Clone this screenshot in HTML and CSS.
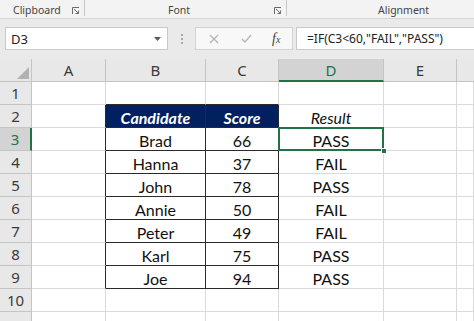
FILE: index.html
```html
<!DOCTYPE html>
<html>
<head>
<meta charset="utf-8">
<link rel="stylesheet" href="styles.css">
</head>
<body>
<div class="ribbon">
  <div class="group g1"><span class="glabel">Clipboard</span><svg class="launch" width="8" height="8" viewBox="0 0 8 8"><path d="M0.5 7V0.5H7" fill="none" stroke="#6b6b6b"/><path d="M2 2L6.5 6.5M3.5 6.5H6.5V3.5" fill="none" stroke="#6b6b6b"/></svg></div>
  <div class="group g2"><span class="glabel">Font</span><svg class="launch" width="8" height="8" viewBox="0 0 8 8"><path d="M0.5 7V0.5H7" fill="none" stroke="#6b6b6b"/><path d="M2 2L6.5 6.5M3.5 6.5H6.5V3.5" fill="none" stroke="#6b6b6b"/></svg></div>
  <div class="group g3"><span class="glabel">Alignment</span></div>
</div>
<div class="fbar">
  <div class="namebox"><span>D3</span><svg class="dd" width="7" height="4" viewBox="0 0 7 4"><path d="M0 0H7L3.5 4Z" fill="#5a5a5a"/></svg></div>
  <div class="dots"><i></i><i></i><i></i></div>
  <div class="fbtns">
    <svg class="fx-x" width="10" height="10" viewBox="0 0 10 10"><path d="M1 1L9 9M9 1L1 9" stroke="#b4b4b4" stroke-width="1.2"/></svg>
    <svg class="fx-ok" width="11" height="9" viewBox="0 0 11 9"><path d="M1 5L4 8L10 1" fill="none" stroke="#b4b4b4" stroke-width="1.2"/></svg>
    <span class="fx"><i>f</i><i class="fxs">x</i></span>
  </div>
  <div class="finput">=IF(C3&lt;60,"FAIL","PASS")</div>
</div>
<div class="sheet">
  <div class="c h corner"><svg width="12" height="12" viewBox="0 0 12 12"><path d="M12 0V12H0Z" fill="#b2b2b2"/></svg></div>
  <div class="c h">A</div><div class="c h">B</div><div class="c h">C</div><div class="c h hsel">D</div><div class="c h">E</div><div class="c h hf"></div>

  <div class="c h rh">1</div><div class="c"></div><div class="c tt"></div><div class="c tt"></div><div class="c"></div><div class="c"></div><div class="c"></div>
  <div class="c h rh">2</div><div class="c tl"></div><div class="c t nv">Candidate</div><div class="c t nv">Score</div><div class="c it">Result</div><div class="c"></div><div class="c"></div>
  <div class="c h rh rsel">3</div><div class="c tl"></div><div class="c t">Brad</div><div class="c t">66</div><div class="c act">PASS<span class="handle"></span></div><div class="c"></div><div class="c"></div>
  <div class="c h rh">4</div><div class="c tl"></div><div class="c t">Hanna</div><div class="c t">37</div><div class="c">FAIL</div><div class="c"></div><div class="c"></div>
  <div class="c h rh">5</div><div class="c tl"></div><div class="c t">John</div><div class="c t">78</div><div class="c">PASS</div><div class="c"></div><div class="c"></div>
  <div class="c h rh">6</div><div class="c tl"></div><div class="c t">Annie</div><div class="c t">50</div><div class="c">FAIL</div><div class="c"></div><div class="c"></div>
  <div class="c h rh">7</div><div class="c tl"></div><div class="c t">Peter</div><div class="c t">49</div><div class="c">FAIL</div><div class="c"></div><div class="c"></div>
  <div class="c h rh">8</div><div class="c tl"></div><div class="c t">Karl</div><div class="c t">75</div><div class="c">PASS</div><div class="c"></div><div class="c"></div>
  <div class="c h rh">9</div><div class="c tl"></div><div class="c t">Joe</div><div class="c t">94</div><div class="c">PASS</div><div class="c"></div><div class="c"></div>
  <div class="c h rh">10</div><div class="c"></div><div class="c"></div><div class="c"></div><div class="c"></div><div class="c"></div><div class="c"></div>
  <div class="c h rh"></div><div class="c"></div><div class="c"></div><div class="c"></div><div class="c"></div><div class="c"></div><div class="c"></div>
</div>
</body>
</html>
```
FILE: styles.css
```css
* { box-sizing: border-box; }
html, body { margin: 0; padding: 0; }
body {
  width: 474px;
  height: 321px;
  overflow: hidden;
  background: #ffffff;
  font-family: "Noto Sans", "Open Sans", sans-serif;
  color: #222;
}

/* ribbon group labels */
.ribbon {
  display: flex;
  height: 19px;
  background: #f3f3f3;
  border-bottom: 1px solid #d6d6d6;
}
.group {
  display: flex;
  align-items: center;
  height: 16px;
  border-right: 1px solid #c8c8c8;
}
.g1 { width: 85px; padding-left: 13px; }
.g2 { width: 202px; padding-left: 83px; }
.g3 { flex: 1; padding-left: 91px; border-right: none; }
.glabel {
  font-size: 10.5px;
  color: #444;
  line-height: 16px;
  margin-top: 4px;
}
.launch { margin-left: auto; margin-right: 4px; margin-top: 5px; }

/* formula bar */
.fbar {
  display: flex;
  height: 40px;
  padding-top: 8px;
  background: #eaeaea;
}
.namebox {
  margin-left: 5px;
  width: 163px;
  height: 23px;
  background: #fff;
  border: 1px solid #c9c9c9;
  display: flex;
  align-items: center;
  padding: 0 6px 0 5px;
  font-size: 13px;
  color: #222;
}
.namebox .dd { margin-left: auto; }
.dots {
  width: 27px;
  height: 23px;
  display: flex;
  flex-direction: column;
  align-items: center;
  justify-content: center;
  gap: 2px;
}
.dots i {
  display: block;
  width: 2px;
  height: 2px;
  background: #a8a8a8;
}
.fbtns {
  width: 98px;
  height: 23px;
  background: #f8f8f8;
  border: 1px solid #d2d2d2;
  display: flex;
  align-items: center;
  padding-left: 13px;
}
.fx-ok { margin-left: 22px; }
.fx {
  margin-left: 20px;
  font-family: "Liberation Serif", serif;
  font-size: 14px;
  color: #444;
}
.fx i { font-style: italic; }
.fx .fxs { font-size: 10px; }
.finput {
  margin-left: 3px;
  flex: 1;
  height: 23px;
  background: #fff;
  border: 1px solid #c9c9c9;
  border-right: none;
  padding-left: 10px;
  display: flex;
  align-items: center;
  font-size: 12px;
  color: #222;
}

/* sheet */
.sheet {
  display: grid;
  grid-template-columns: 32px 74px 100px 73px 105px 73px 17px;
  grid-auto-rows: 23px;
}
.c {
  border-right: 1px solid #dadada;
  border-bottom: 1px solid #dadada;
  display: flex;
  align-items: center;
  justify-content: center;
  font-family: "Lato", "Noto Sans", sans-serif;
  font-size: 16px;
  color: #111;
  padding-top: 2px;
}
.h {
  background: #e8e8e8;
  border-right-color: #c4c4c4;
  border-bottom-color: #c4c4c4;
  font-family: "Noto Sans", sans-serif;
  font-size: 15px;
  color: #3a3a3a;
  padding-top: 0;
}
.corner { align-items: flex-end; justify-content: flex-end; padding: 0 2px 2px 0; }
.hf { border-right: none; }
.hsel {
  background: #d3d3d3;
  color: #217346;
  border-bottom: 2px solid #217346;
}
.rsel {
  background: #d3d3d3;
  color: #217346;
  border-right: 2px solid #217346;
}
.tt { border-bottom-color: #2a2a2a; }
.tl { border-right-color: #2a2a2a; }
.t { border-right-color: #2a2a2a; border-bottom-color: #2a2a2a; }
.nv {
  background: #002060;
  color: #fff;
  font-weight: 700;
  font-style: italic;
}
.it { font-style: italic; }
.act { position: relative; }
.act::after {
  content: "";
  position: absolute;
  left: -1px;
  top: -1px;
  right: -1px;
  bottom: -1px;
  border: 2px solid #217346;
}
.handle {
  position: absolute;
  right: -4px;
  bottom: -4px;
  width: 6px;
  height: 6px;
  background: #217346;
  border: 1px solid #fff;
  z-index: 2;
}
```
